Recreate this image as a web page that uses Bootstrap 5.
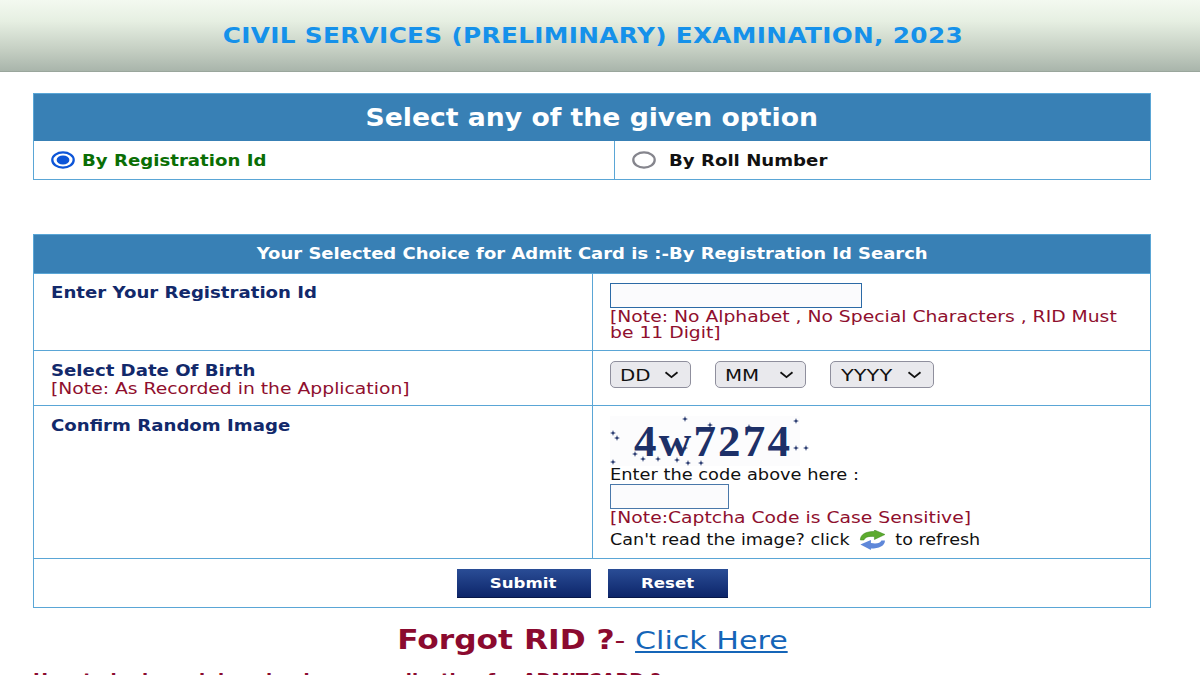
<!DOCTYPE html>
<html lang="en">
<head>
<meta charset="utf-8">
<title>Admit Card</title>
<link rel="stylesheet" href="https://cdn.jsdelivr.net/npm/bootstrap@5.3.0/dist/css/bootstrap.min.css">
<style>
html,body{height:675px;overflow:hidden;background:#fff;}
body{font-family:"DejaVu Sans",Verdana,sans-serif;font-size:15px;color:#111;}
.wide{display:inline-block;transform:scaleX(1.17);transform-origin:left center;white-space:nowrap;}
.wide-c{display:inline-block;transform:scaleX(1.16);transform-origin:center;white-space:nowrap;}
.exam-head{height:72px;padding-right:15px;background:linear-gradient(180deg,#f3f9f0 0%,#e6efe2 30%,#c5cfc3 70%,#a9b5ab 100%);border-bottom:1px solid #9aa69c;}
.exam-title{color:#1591ea;font-size:21.5px;font-weight:700;margin:0;letter-spacing:.3px;}
.scale-title{transform:scaleX(1.15);}
.scale-opt{transform:scaleX(1.11);}
.page-wrap{width:1118px;margin:21px 0 0 33px;}
.opt-box{border:1px solid #5aa6d6;}
.opt-head{background:#3880b5;color:#fff;height:47px;font-size:24px;font-weight:700;}
.opt-row{height:38px;}
.opt-cell{width:580px;padding-left:17px;font-size:15.5px;font-weight:700;gap:7px;}
.opt-cell+.opt-cell{width:auto;flex:1;border-left:1px solid #5aa6d6;padding-left:17px;gap:13px;}
.opt-cell .wide{padding-top:4px;}
.txt-green{color:#0a6e05;}
.form-box{border:1px solid #5aa6d6;margin-top:54px;}
.form-head{background:#3880b5;color:#fff;height:38px;font-size:15.5px;font-weight:700;}
.form-head .wide-c{padding-top:2px;}
.form-row{border-top:1px solid #5aa6d6;}
.cell-l{width:558px;padding:10px 0 0 17px;flex:none;}
.pad-more{padding-top:11px;}
.cell-r{flex:1;border-left:1px solid #5aa6d6;padding:9px 0 0 17px;}
.lbl{color:#12296b;font-weight:700;font-size:15.5px;line-height:19px;}
.note{color:#8f0f2e;font-size:15px;line-height:16px;}
.note .wide{transform:scaleX(1.25);}
.note-rid{margin-top:1px;}
.r1{height:77px;}.r2{height:55px;}.r3{height:153px;}.r4{height:49px;}
.id-input{width:252px;height:25px;border:1px solid #2c6aa6;background:#fbfbfd;display:block;}
.cap-input{width:119px;height:25px;border:1px solid #4a78aa;background:#fbfbfd;display:block;margin-top:-1px;}
.sel-fake{height:27px;font-size:16.5px;color:#111;background:#e9e9ed;border:1px solid #8f8f9d;border-radius:5px;padding:0 11px 0 9px;}
.sel-dd{width:81px;}.sel-mm{width:91px;}.sel-yy{width:104px;}
.sel-txt{display:inline-block;padding-top:3px;transform:scaleX(1.2);transform-origin:left center;}
.sel-yy .sel-txt{margin-left:1px;transform:scaleX(1.27);}
.sel-wrap{gap:24px;margin-top:1px;}
.cap-wrap{width:190px;height:50px;position:relative;margin-top:1px;background:#fcfcfd;}
.cap-txt{position:absolute;left:24px;top:0;font-family:"Liberation Serif",serif;font-weight:700;font-size:45px;line-height:50px;color:#1d3068;letter-spacing:2.2px;}
.cap-dots{position:absolute;left:0;top:0;overflow:visible;}
.plain{font-size:15px;line-height:19px;color:#111;position:relative;}
.note-cap{margin-top:1px;}
.scale-enter{transform:scaleX(1.187);}
.refresh-line{margin-top:4px;gap:8px;width:max-content;transform:scaleX(1.17);transform-origin:left center;}
.act-btn{height:29px;border:0;border-radius:0;background:linear-gradient(180deg,#2a4d96,#0c2468);color:#fff;font-weight:700;font-size:13.5px;padding:0;box-shadow:inset 0 -1px 0 #071748;}
.act-1{width:134px;}.act-2{width:120px;}
.btn-gap{gap:17px;}
.btn-txt{display:inline-block;transform:scaleX(1.23);}
.forgot{margin-top:16px;line-height:32px;}
.forgot-in{display:inline-block;transform:scaleX(1.18);white-space:nowrap;font-size:25.5px;}
.forgot b{color:#8b0a2f;font-size:26.5px;}
.forgot-dash{color:#8b0a2f;}
.forgot a{color:#1565b8;}
.cut-line{color:#8b0a2f;font-weight:700;font-size:15px;margin-top:11px;line-height:18px;}
.cut-line .wide{transform:scaleX(1.2);}
</style>
</head>
<body>
<header class="exam-head d-flex align-items-center justify-content-center">
<h1 class="exam-title"><span class="wide-c scale-title">CIVIL SERVICES (PRELIMINARY) EXAMINATION, 2023</span></h1>
</header>
<main class="page-wrap">
<section class="opt-box">
<div class="opt-head d-flex align-items-center justify-content-center"><span class="wide-c scale-opt">Select any of the given option</span></div>
<div class="opt-row d-flex">
<div class="opt-cell d-flex align-items-center txt-green">
<svg width="24" height="18" viewBox="0 0 24 18"><ellipse cx="12" cy="9" rx="10.7" ry="7.6" fill="#fff" stroke="#0d55d8" stroke-width="2.3"/><ellipse cx="12" cy="9" rx="6.4" ry="4.6" fill="#0d55d8"/></svg>
<span class="wide">By Registration Id</span></div>
<div class="opt-cell d-flex align-items-center">
<svg width="24" height="18" viewBox="0 0 24 18"><ellipse cx="12" cy="9" rx="10.7" ry="7.6" fill="#fff" stroke="#85858d" stroke-width="2.3"/></svg>
<span class="wide">By Roll Number</span></div>
</div>
</section>
<section class="form-box">
<div class="form-head d-flex align-items-center justify-content-center"><span class="wide-c">Your Selected Choice for Admit Card is :-By Registration Id Search</span></div>
<div class="form-row r1 d-flex">
<div class="cell-l"><div class="lbl"><span class="wide">Enter Your Registration Id</span></div></div>
<div class="cell-r"><div class="id-input"></div><div class="note note-rid"><span class="wide">[Note: No Alphabet , No Special Characters , RID Must</span><br><span class="wide">be 11 Digit]</span></div></div>
</div>
<div class="form-row r2 d-flex">
<div class="cell-l pad-more"><div class="lbl"><span class="wide">Select Date Of Birth</span></div><div class="note"><span class="wide">[Note: As Recorded in the Application]</span></div></div>
<div class="cell-r"><div class="sel-wrap d-flex">
<div class="sel-fake sel-dd d-flex align-items-center justify-content-between"><span class="sel-txt">DD</span><svg width="15" height="8" viewBox="0 0 15 8"><path d="M1.500 1.200 7.500 6.200l6-5" fill="none" stroke="#111" stroke-width="1.800"/></svg></div>
<div class="sel-fake sel-mm d-flex align-items-center justify-content-between"><span class="sel-txt">MM</span><svg width="15" height="8" viewBox="0 0 15 8"><path d="M1.500 1.200 7.500 6.200l6-5" fill="none" stroke="#111" stroke-width="1.800"/></svg></div>
<div class="sel-fake sel-yy d-flex align-items-center justify-content-between"><span class="sel-txt">YYYY</span><svg width="15" height="8" viewBox="0 0 15 8"><path d="M1.500 1.200 7.500 6.200l6-5" fill="none" stroke="#111" stroke-width="1.800"/></svg></div>
</div></div>
</div>
<div class="form-row r3 d-flex">
<div class="cell-l pad-more"><div class="lbl"><span class="wide">Confirm Random Image</span></div></div>
<div class="cell-r">
<div class="cap-wrap"><span class="cap-txt">4w7274</span>
<svg class="cap-dots" width="190" height="50" viewBox="0 0 190 50" fill="#1d3068"><defs><path id="spk" d="M0-3 .7-.7 3 0 .7.700 0 3-.7.700-3 0-.7-.7Z"/></defs><use href="#spk" x="75" y="3"/><use href="#spk" x="186" y="5"/><use href="#spk" x="100" y="9"/><use href="#spk" x="3" y="17"/><use href="#spk" x="7" y="22"/><use href="#spk" x="3" y="46"/><use href="#spk" x="25" y="38"/><use href="#spk" x="33" y="43"/><use href="#spk" x="48" y="43"/><use href="#spk" x="67" y="44"/><use href="#spk" x="78" y="47"/><use href="#spk" x="91" y="47"/><use href="#spk" x="139" y="11"/><use href="#spk" x="186" y="32"/><use href="#spk" x="196" y="32"/><use href="#spk" x="75" y="32"/></svg></div>
<div class="plain"><span class="wide scale-enter">Enter the code above here :</span></div>
<div class="cap-input"></div>
<div class="note note-cap"><span class="wide">[Note:Captcha Code is Case Sensitive]</span></div>
<div class="plain refresh-line d-flex align-items-center"><span>Can't read the image? click</span>
<svg width="23" height="20" viewBox="0 0 23 20"><path d="M1 10C1 4 6 1.500 13 1.500V0l9 4.500L13 9.500V6.500C8 6 5 7 4 10Z" fill="#5cab2e" stroke="#3f8a1f" stroke-width=".5"/><path d="M22 10.500C22 16 17 18.500 10 18.500V20L1 14.500 10 10V13C15 14 18 13 19 10.500Z" fill="#5f88d9"/></svg>
<span>to refresh</span></div>
</div>
</div>
<div class="form-row r4 d-flex align-items-center justify-content-center btn-gap">
<button class="act-btn act-1" type="button"><span class="btn-txt">Submit</span></button>
<button class="act-btn act-2" type="button"><span class="btn-txt">Reset</span></button>
</div>
</section>
<div class="forgot text-center"><span class="forgot-in"><b>Forgot RID ?</b><span class="forgot-dash">-</span> <a href="#">Click Here</a></span></div>
<div class="cut-line"><span class="wide">How to login and download your application for ADMITCARD ?</span></div>
</main>
<script src="https://cdn.jsdelivr.net/npm/bootstrap@5.3.0/dist/js/bootstrap.bundle.min.js"></script>
</body>
</html>
